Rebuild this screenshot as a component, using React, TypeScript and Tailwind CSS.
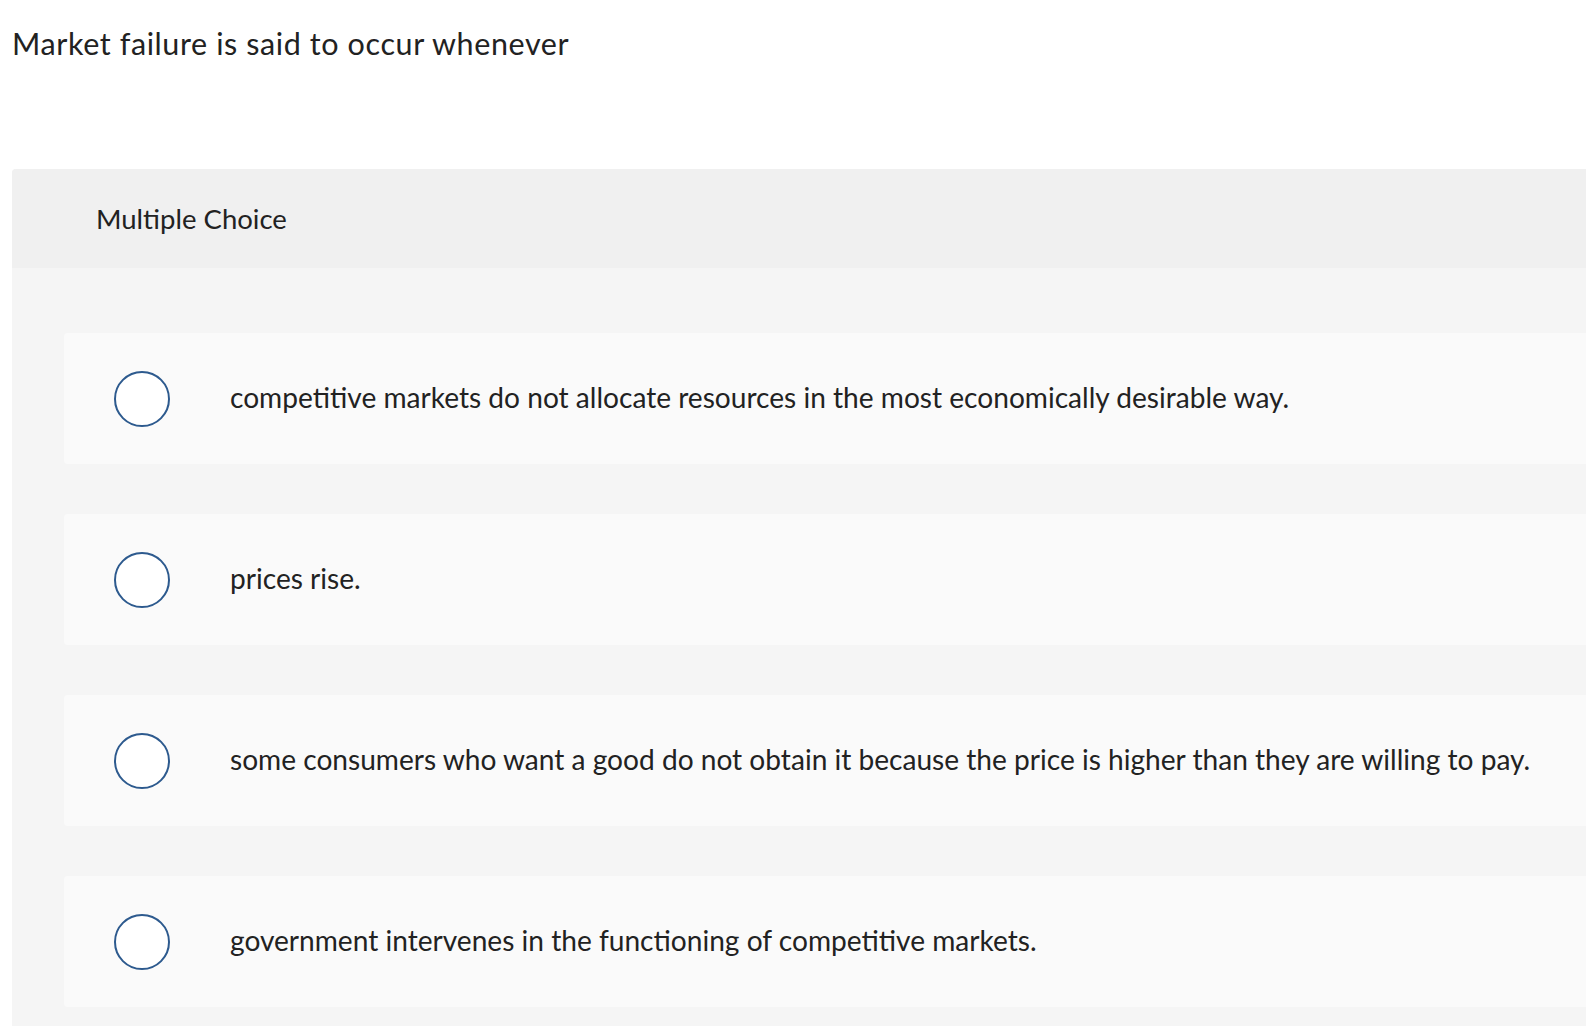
const options = [
  'competitive markets do not allocate resources in the most economically desirable way.',
  'prices rise.',
  'some consumers who want a good do not obtain it because the price is higher than they are willing to pay.',
  'government intervenes in the functioning of competitive markets.',
];

function Radio() {
  return (
    <div className="h-[56px] w-[56px] shrink-0 rounded-full border-2 border-[#2d5a8e] bg-white" />
  );
}

export default function App() {
  return (
    <div
      className="h-[1026px] overflow-hidden bg-white pl-3 text-[#222222]"
      style={{ fontFamily: 'Lato, "Open Sans", Arial, sans-serif' }}
    >
      <div className="flex h-[169px] items-start pt-[25px]">
        <h1 className="text-[30.5px] leading-[36px] font-normal tracking-[0.6px]">
          Market failure is said to occur whenever
        </h1>
      </div>

      <div className="rounded-tl-[4px] bg-[#f5f5f5]">
        <div className="flex h-[99px] items-center rounded-tl-[4px] bg-[#f0f0f0] pl-[84px] text-[27.5px]">
          Multiple Choice
        </div>

        <div className="flex flex-col gap-[50px] pt-[65px] pb-[40px] pl-[52px]">
          {options.map((text) => (
            <div
              key={text}
              className="flex h-[131px] items-center rounded-l-[4px] bg-[#fafafa] pl-[50px]"
            >
              <Radio />
              <span className="ml-[60px] pb-[2px] text-[28.1px]">{text}</span>
            </div>
          ))}
        </div>
      </div>
    </div>
  );
}
